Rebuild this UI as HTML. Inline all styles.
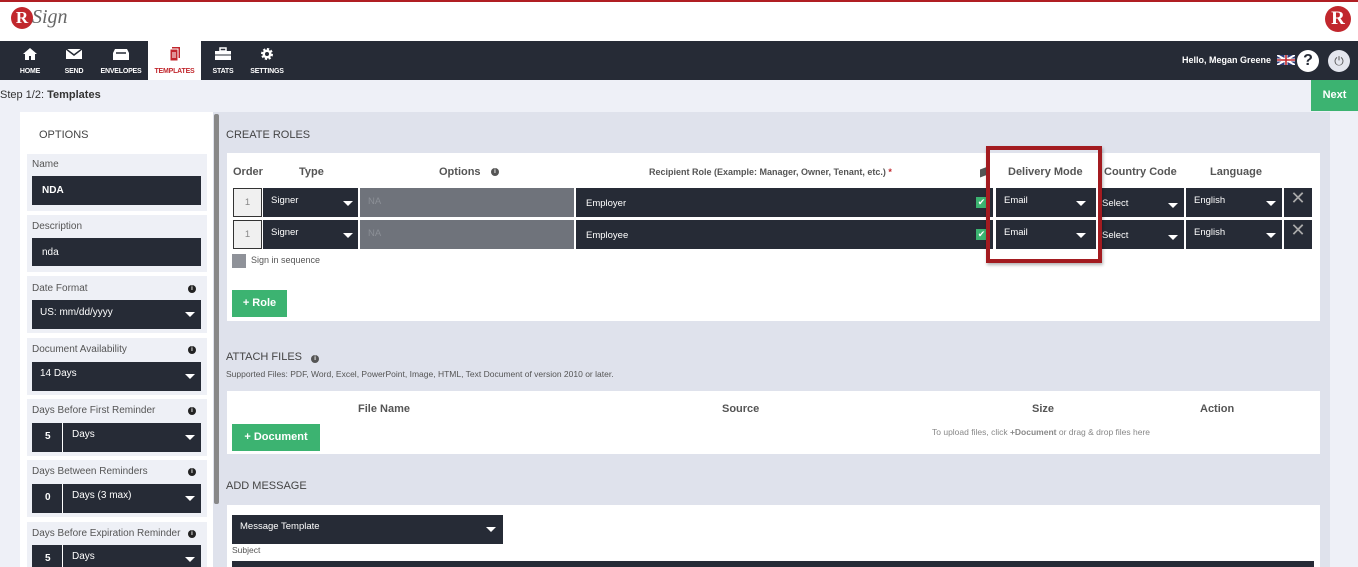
<!DOCTYPE html>
<html style="width:1358px;height:567px;overflow:hidden"><head><meta charset="utf-8"><style>
*{box-sizing:border-box;margin:0;padding:0}
html,body{overflow:hidden}
body{width:1358px;height:567px;overflow:hidden;font-family:"Liberation Sans",Arial,sans-serif;background:#dfe2ec;position:relative;font-size:11px;color:#333}
.a{position:absolute}
.dk{background:#262b36;color:#fff}
.nav .it{position:absolute;top:41px;height:39px;text-align:center;color:#fff;font-size:7px;font-weight:bold}
.nav .it .t{position:absolute;top:27px;left:0;right:0;letter-spacing:-.2px}
.nav .it svg{position:absolute;top:6px;left:50%;margin-left:-8px}
.lbl{font-size:10px;color:#555}
.fld{background:#262b36;color:#fff;font-size:10px;position:absolute;left:32px;width:169px;height:29px}
.tri{position:absolute;width:0;height:0;border-left:5px solid transparent;border-right:5px solid transparent;border-top:5px solid #fff}
.blk{position:absolute;left:27px;width:180px;background:#eef0f6}
.info{display:inline-block;width:8px;height:8px;border-radius:50%;background:#222;color:#fff;font-size:6px;text-align:center;line-height:8px;font-weight:bold}
.hd{font-size:11px;color:#555;font-weight:bold}
.cell{position:absolute;height:29px;font-size:9.5px;color:#fff}
</style></head><body>
<div class="a" style="left:0;top:0;width:1358px;height:41px;background:#fff;border-top:2px solid #b01e23"></div>
<div class="a" style="left:11px;top:7px;width:22px;height:22px;border-radius:50%;background:#c1272d;color:#fff;font:bold 17px 'Liberation Serif',serif;text-align:center;line-height:22px">R</div>
<div class="a" style="left:32px;top:6px;font:italic 20px 'Liberation Serif',serif;color:#666">Sign</div>
<div class="a" style="left:1325px;top:6px;width:26px;height:26px;border-radius:50%;background:#c1272d;color:#fff;font:bold 19px 'Liberation Serif',serif;text-align:center;line-height:26px">R</div>
<div class="a dk" style="left:0;top:41px;width:1358px;height:39px"></div>
<div class="nav">
<div class="it" style="left:12px;width:36px"><svg width="16" height="14" viewBox="0 0 16 14"><path d="M8 1L1 7h2v6h4V9h2v4h4V7h2z" fill="#fff"/></svg><div class="t">HOME</div></div>
<div class="it" style="left:56px;width:36px"><svg width="16" height="14" viewBox="0 0 16 14"><path d="M0 2h16v10H0z" fill="#fff"/><path d="M0 2l8 6 8-6" stroke="#262b36" stroke-width="1.5" fill="none"/></svg><div class="t">SEND</div></div>
<div class="it" style="left:97px;width:48px"><svg width="16" height="14" viewBox="0 0 16 14"><path d="M2 2h12l2 4v7H0V6z" fill="#fff"/><path d="M3 6h10" stroke="#262b36" stroke-width="1.5"/></svg><div class="t">ENVELOPES</div></div>
<div class="it" style="left:148px;width:53px;background:#fff;color:#c1272d"><svg width="16" height="14" viewBox="0 0 16 14"><path d="M5 0h8v11H5z" fill="#c1272d"/><path d="M3 2h8v12H3z" fill="#c1272d" stroke="#fff" stroke-width="1"/><path d="M5 6h4M5 8h4M5 10h4" stroke="#fff"/></svg><div class="t">TEMPLATES</div></div>
<div class="it" style="left:206px;width:34px"><svg width="16" height="14" viewBox="0 0 16 14"><path d="M5 1h6v3H5z" stroke="#fff" fill="none" stroke-width="1.5"/><path d="M0 4h16v9H0z" fill="#fff"/><path d="M0 8h16" stroke="#262b36"/></svg><div class="t">STATS</div></div>
<div class="it" style="left:248px;width:38px"><svg width="16" height="14" viewBox="0 0 16 14"><circle cx="8" cy="7" r="4.5" fill="#fff" stroke="#fff" stroke-width="3" stroke-dasharray="2 1.5"/><circle cx="8" cy="7" r="2" fill="#262b36"/></svg><div class="t">SETTINGS</div></div>
</div>
<div class="a" style="left:1182px;top:55px;color:#fff;font-size:9px;font-weight:bold;white-space:nowrap">Hello, Megan Greene</div>
<svg class="a" style="left:1277px;top:55px" width="18" height="10" viewBox="0 0 18 10"><rect width="18" height="10" fill="#2b3a7a"/><path d="M0 0L18 10M18 0L0 10" stroke="#fff" stroke-width="2"/><path d="M9 0v10M0 5h18" stroke="#fff" stroke-width="3"/><path d="M9 0v10M0 5h18" stroke="#c1272d" stroke-width="1.6"/></svg>
<div class="a" style="left:1297px;top:50px;width:22px;height:22px;border-radius:50%;background:#fff;color:#262b36;font-weight:bold;font-size:16px;text-align:center;line-height:22px">?</div>
<div class="a" style="left:1328px;top:50px;width:22px;height:22px;border-radius:50%;background:#e4e6ee;color:#555;font-size:12px;text-align:center;line-height:22px">⏻</div>
<div class="a" style="left:0;top:80px;width:1358px;height:32px;background:#eef0f7"></div>
<div class="a" style="left:0;top:89px;font-size:11px;color:#333">Step 1/2: <b>Templates</b></div>
<div class="a" style="left:1311px;top:80px;width:47px;height:31px;background:#3cb371;color:#fff;font-weight:bold;font-size:11px;text-align:center;line-height:31px">Next</div>
<div class="a" style="left:1330px;top:112px;width:28px;height:455px;background:#eef0f7"></div>
<div class="a" style="left:0;top:112px;width:20px;height:455px;background:#eef0f7"></div>
<div class="a" style="left:20px;top:112px;width:193px;height:455px;background:#fff"></div>
<div class="a" style="left:214px;top:114px;width:5px;height:390px;background:#888;border-radius:2px"></div>
<div class="a" style="left:39px;top:129px;font-size:11px;color:#444">OPTIONS</div>
<div class="blk" style="top:154px;height:57px"></div><div class="a lbl" style="left:32px;top:159px">Name</div>
<div class="fld" style="top:176px"><span style="position:absolute;left:10px;top:9px;font-weight:bold">NDA</span></div>
<div class="blk" style="top:215px;height:57px"></div><div class="a lbl" style="left:32px;top:221px">Description</div>
<div class="fld" style="top:238px;height:28px"><span style="position:absolute;left:10px;top:9px">nda</span></div>
<div class="blk" style="top:276px;height:57px"></div><div class="a lbl" style="left:32px;top:283px">Date Format</div><div class="a info" style="left:188px;top:285px">i</div>
<div class="fld" style="top:300px"><span style="position:absolute;left:8px;top:7px">US: mm/dd/yyyy</span><div class="tri" style="left:153px;top:12px"></div></div>
<div class="blk" style="top:338px;height:57px"></div><div class="a lbl" style="left:32px;top:344px">Document Availability</div><div class="a info" style="left:188px;top:346px">i</div>
<div class="fld" style="top:362px"><span style="position:absolute;left:8px;top:6px">14 Days</span><div class="tri" style="left:153px;top:12px"></div></div>
<div class="blk" style="top:399px;height:57px"></div><div class="a lbl" style="left:32px;top:405px">Days Before First Reminder</div><div class="a info" style="left:188px;top:407px">i</div>
<div class="fld" style="top:423px"><span style="position:absolute;left:13px;top:8px;font-weight:bold">5</span><div style="position:absolute;left:30px;top:0;width:1px;height:29px;background:#fff"></div><span style="position:absolute;left:40px;top:6px">Days</span><div class="tri" style="left:153px;top:12px"></div></div>
<div class="blk" style="top:460px;height:57px"></div><div class="a lbl" style="left:32px;top:466px">Days Between Reminders</div><div class="a info" style="left:188px;top:468px">i</div>
<div class="fld" style="top:484px"><span style="position:absolute;left:13px;top:8px;font-weight:bold">0</span><div style="position:absolute;left:30px;top:0;width:1px;height:29px;background:#fff"></div><span style="position:absolute;left:40px;top:6px">Days (3 max)</span><div class="tri" style="left:153px;top:12px"></div></div>
<div class="blk" style="top:522px;height:45px"></div><div class="a lbl" style="left:32px;top:528px">Days Before Expiration Reminder</div><div class="a info" style="left:188px;top:530px">i</div>
<div class="fld" style="top:545px;height:22px"><span style="position:absolute;left:13px;top:8px;font-weight:bold">5</span><div style="position:absolute;left:30px;top:0;width:1px;height:22px;background:#fff"></div><span style="position:absolute;left:40px;top:6px">Days</span><div class="tri" style="left:153px;top:12px"></div></div>
<div class="a" style="left:226px;top:129px;font-size:11px;color:#444">CREATE ROLES</div>
<div class="a" style="left:227px;top:153px;width:1093px;height:168px;background:#fff"></div>
<div class="a hd" style="left:233px;top:166px">Order</div>
<div class="a hd" style="left:299px;top:166px">Type</div>
<div class="a hd" style="left:439px;top:166px">Options</div><div class="a info" style="left:491px;top:168px;background:#555">i</div>
<div class="a" style="left:649px;top:167px;font-size:9px;color:#555;font-weight:bold">Recipient Role (Example: Manager, Owner, Tenant, etc.) <span style="color:#c1272d">*</span></div>
<div class="a" style="left:980px;top:168px;width:8px;height:8px;background:#555;transform:skewY(-20deg)"></div>
<div class="a hd" style="left:1008px;top:166px">Delivery Mode</div>
<div class="a hd" style="left:1104px;top:166px">Country Code</div>
<div class="a hd" style="left:1210px;top:166px">Language</div>
<div class="a" style="left:233px;top:188px;width:1079px;height:29px">
<div class="cell" style="left:0;width:29px;background:#f0f0f0;border:1px solid #333;color:#888;text-align:center;line-height:27px">1</div>
<div class="cell dk" style="left:30px;width:95px"><span style="position:absolute;left:8px;top:7px">Signer</span><div class="tri" style="left:80px;top:13px"></div></div>
<div class="cell" style="left:127px;width:214px;background:#6f737b;color:#8b8f96"><span style="position:absolute;left:8px;top:8px">NA</span></div>
<div class="cell dk" style="left:343px;width:417px"><span style="position:absolute;left:10px;top:10px">Employer</span><div style="position:absolute;left:400px;top:9px;width:11px;height:11px;background:#3cb371;color:#fff;font-size:9px;line-height:11px;text-align:center">✔</div></div>
<div class="cell dk" style="left:763px;width:100px"><span style="position:absolute;left:8px;top:7px">Email</span><div class="tri" style="left:80px;top:13px"></div></div>
<div class="cell dk" style="left:865px;width:86px"><span style="position:absolute;left:4px;top:10px">Select</span><div class="tri" style="left:70px;top:15px"></div></div>
<div class="cell dk" style="left:953px;width:96px"><span style="position:absolute;left:8px;top:7px">English</span><div class="tri" style="left:80px;top:13px"></div></div>
<div class="cell dk" style="left:1051px;width:28px;font-size:18px;color:#aaa;text-align:center;line-height:20px">✕</div>
</div>
<div class="a" style="left:233px;top:220px;width:1079px;height:29px">
<div class="cell" style="left:0;width:29px;background:#f0f0f0;border:1px solid #333;color:#888;text-align:center;line-height:27px">1</div>
<div class="cell dk" style="left:30px;width:95px"><span style="position:absolute;left:8px;top:7px">Signer</span><div class="tri" style="left:80px;top:13px"></div></div>
<div class="cell" style="left:127px;width:214px;background:#6f737b;color:#8b8f96"><span style="position:absolute;left:8px;top:8px">NA</span></div>
<div class="cell dk" style="left:343px;width:417px"><span style="position:absolute;left:10px;top:10px">Employee</span><div style="position:absolute;left:400px;top:9px;width:11px;height:11px;background:#3cb371;color:#fff;font-size:9px;line-height:11px;text-align:center">✔</div></div>
<div class="cell dk" style="left:763px;width:100px"><span style="position:absolute;left:8px;top:7px">Email</span><div class="tri" style="left:80px;top:13px"></div></div>
<div class="cell dk" style="left:865px;width:86px"><span style="position:absolute;left:4px;top:10px">Select</span><div class="tri" style="left:70px;top:15px"></div></div>
<div class="cell dk" style="left:953px;width:96px"><span style="position:absolute;left:8px;top:7px">English</span><div class="tri" style="left:80px;top:13px"></div></div>
<div class="cell dk" style="left:1051px;width:28px;font-size:18px;color:#aaa;text-align:center;line-height:20px">✕</div>
</div>
<div class="a" style="left:232px;top:254px;width:14px;height:14px;background:#8f9299"></div>
<div class="a" style="left:251px;top:255px;font-size:9px;color:#555">Sign in sequence</div>
<div class="a" style="left:232px;top:290px;width:55px;height:27px;background:#3cb371;color:#fff;font-weight:bold;font-size:11px;text-align:center;line-height:27px">+ Role</div>
<div class="a" style="left:986px;top:146px;width:116px;height:117px;border:4px solid #a31b20;box-shadow:1px 2px 3px rgba(0,0,0,.3)"></div>
<div class="a" style="left:226px;top:351px;font-size:11px;color:#444">ATTACH FILES <span class="info" style="background:#555;margin-left:6px">i</span></div>
<div class="a" style="left:226px;top:369px;font-size:8.5px;color:#555">Supported Files: PDF, Word, Excel, PowerPoint, Image, HTML, Text Document of version 2010 or later.</div>
<div class="a" style="left:227px;top:391px;width:1093px;height:63px;background:#fff"></div>
<div class="a hd" style="left:358px;top:403px">File Name</div>
<div class="a hd" style="left:722px;top:403px">Source</div>
<div class="a hd" style="left:1032px;top:403px">Size</div>
<div class="a hd" style="left:1200px;top:403px">Action</div>
<div class="a" style="left:232px;top:424px;width:88px;height:27px;background:#3cb371;color:#fff;font-weight:bold;font-size:11px;text-align:center;line-height:27px">+ Document</div>
<div class="a" style="left:932px;top:427px;font-size:8.5px;color:#888">To upload files, click <b>+Document</b> or drag &amp; drop files here</div>
<div class="a" style="left:226px;top:480px;font-size:11px;color:#444">ADD MESSAGE</div>
<div class="a" style="left:227px;top:505px;width:1093px;height:62px;background:#fff"></div>
<div class="a dk" style="left:232px;top:515px;width:271px;height:29px"><span style="position:absolute;left:8px;top:6px;font-size:9.5px">Message Template</span><div class="tri" style="left:254px;top:12px"></div></div>
<div class="a" style="left:232px;top:545px;font-size:8.5px;color:#555">Subject</div>
<div class="a dk" style="left:232px;top:561px;width:1082px;height:6px"></div>
</body></html>
